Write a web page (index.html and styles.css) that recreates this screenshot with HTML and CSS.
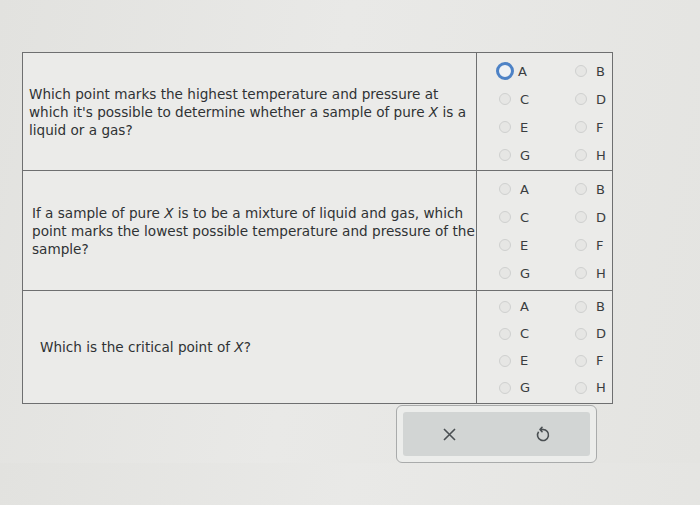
FILE: index.html
```html
<!DOCTYPE html>
<html lang="en">
<head>
<meta charset="UTF-8">
<title>Phase Diagram Questions</title>
<link rel="stylesheet" href="styles.css">
</head>
<body>
 <div class="page">
  <table class="quiz">
   <colgroup><col class="col-q"><col class="col-o"></colgroup>
   <tr class="row1">
    <td class="question">Which point marks the highest temperature and pressure at which it's possible to determine whether a sample of pure <i>X</i> is a liquid or a gas?</td>
    <td class="options">
     <div class="grid">
      <label class="opt"><span class="radio selected"></span>A</label>
      <label class="opt"><span class="radio"></span>B</label>
      <label class="opt"><span class="radio"></span>C</label>
      <label class="opt"><span class="radio"></span>D</label>
      <label class="opt"><span class="radio"></span>E</label>
      <label class="opt"><span class="radio"></span>F</label>
      <label class="opt"><span class="radio"></span>G</label>
      <label class="opt"><span class="radio"></span>H</label>
     </div>
    </td>
   </tr>
   <tr class="row2">
    <td class="question q-mid">If a sample of pure <i>X</i> is to be a mixture of liquid and gas, which point marks the lowest possible temperature and pressure of the sample?</td>
    <td class="options">
     <div class="grid">
      <label class="opt"><span class="radio"></span>A</label>
      <label class="opt"><span class="radio"></span>B</label>
      <label class="opt"><span class="radio"></span>C</label>
      <label class="opt"><span class="radio"></span>D</label>
      <label class="opt"><span class="radio"></span>E</label>
      <label class="opt"><span class="radio"></span>F</label>
      <label class="opt"><span class="radio"></span>G</label>
      <label class="opt"><span class="radio"></span>H</label>
     </div>
    </td>
   </tr>
   <tr class="row3">
    <td class="question q-last">Which is the critical point of <i>X</i>?</td>
    <td class="options">
     <div class="grid tight">
      <label class="opt"><span class="radio"></span>A</label>
      <label class="opt"><span class="radio"></span>B</label>
      <label class="opt"><span class="radio"></span>C</label>
      <label class="opt"><span class="radio"></span>D</label>
      <label class="opt"><span class="radio"></span>E</label>
      <label class="opt"><span class="radio"></span>F</label>
      <label class="opt"><span class="radio"></span>G</label>
      <label class="opt"><span class="radio"></span>H</label>
     </div>
    </td>
   </tr>
  </table>

  <div class="actions">
   <div class="bar">
    <button class="icon-btn" aria-label="Clear">
     <svg width="15" height="15" viewBox="0 0 15 15"><path d="M2 2L13 13M13 2L2 13" stroke="#4a4f52" stroke-width="1.6" fill="none"/></svg>
    </button>
    <button class="icon-btn" aria-label="Reset">
     <svg width="16" height="18" viewBox="0 0 16 18"><path d="M8 4.5A5.5 5.5 0 1 1 3.6 6.7" stroke="#4a4f52" stroke-width="1.6" fill="none"/><path d="M8 4.5H5.2M7 2.4L5 4.5L7 6.6" stroke="#4a4f52" stroke-width="1.6" fill="none" stroke-linecap="round" stroke-linejoin="round"/></svg>
    </button>
   </div>
  </div>
 </div>
</body>
</html>
```

FILE: styles.css
```css
body{margin:0;background:linear-gradient(100deg,#e2e2df 0%,#e9e9e7 45%,#e4e4e1 100%);font-family:"DejaVu Sans",Verdana,sans-serif;color:#2f3234}
.page{padding:52px 0 0 22px}
.quiz{border-collapse:collapse;background:#ebebe9;width:590px;table-layout:fixed}
.col-q{width:454px}
.col-o{width:136px}
.quiz td{border:1px solid #6e6f70;padding:0}
.row1{height:118px}
.row2{height:120px}
.row3{height:113px}
.question{padding:0 0 0 6px !important;font-size:13.6px;line-height:18px;vertical-align:middle}
.q-mid{padding-left:9px !important}
.q-last{padding-left:17px !important}
.options{vertical-align:top}
.grid{display:grid;grid-template-columns:76px 60px;padding:4px 0 0 22px}
.grid.tight{padding-top:2px}
.opt{display:flex;align-items:center;height:28px;font-size:13px;color:#3a3d40}
.tight .opt{height:27px}
.radio{width:12px;height:12px;border:1px solid #cfd0cf;border-radius:50%;background:#e6e6e4;margin-right:9px;box-sizing:border-box}
.radio.selected{width:18px;height:18px;border:3px solid #4d82c6;background:#eef1f4;margin-left:-3px;margin-right:4px}
.actions{margin:1px 0 0 374px;width:201px;box-sizing:border-box;border:1px solid #a9abab;border-radius:6px;background:#ecedeb;padding:6px}
.bar{display:flex;justify-content:space-around;align-items:center;height:44px;background:#d2d5d4;border-radius:3px}
.icon-btn{background:none;border:none;padding:0;display:flex;align-items:center;cursor:pointer}
```
